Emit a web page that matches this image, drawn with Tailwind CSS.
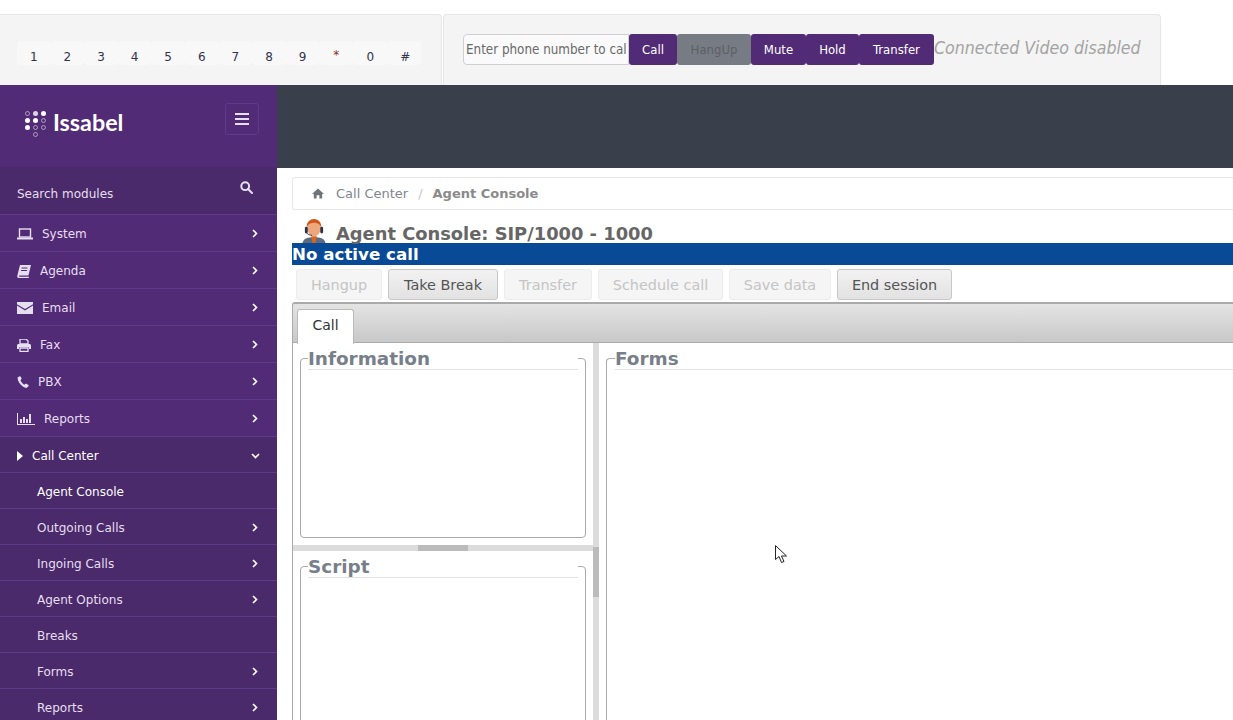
<!DOCTYPE html>
<html>
<head>
  <title>Agent Console</title>
  <script src="https://cdn.jsdelivr.net/npm/@tailwindcss/browser@4"></script>
</head>
<body class="bg-white">
<div class="relative h-[720px] w-[1233px] overflow-hidden font-['DejaVu_Sans',sans-serif] text-[12px]">

  <!-- softphone bar -->
  <div class="flex h-[85px] pt-[14px]">
    <div class="flex h-[71px] w-[442px] items-end rounded-tr border border-b-0 border-l-0 border-[#e6e6e6] bg-[#f4f4f4] pb-[20px] pl-[17px] text-[12px] leading-[12px] text-[#33334d]">
      <span class="flex h-[24px] w-[33.6px] items-end justify-center rounded-sm bg-[#f8f8f8] pb-[2px]">1</span>
      <span class="flex h-[24px] w-[33.6px] items-end justify-center rounded-sm bg-[#f8f8f8] pb-[2px]">2</span>
      <span class="flex h-[24px] w-[33.6px] items-end justify-center rounded-sm bg-[#f8f8f8] pb-[2px]">3</span>
      <span class="flex h-[24px] w-[33.6px] items-end justify-center rounded-sm bg-[#f8f8f8] pb-[2px]">4</span>
      <span class="flex h-[24px] w-[33.6px] items-end justify-center rounded-sm bg-[#f8f8f8] pb-[2px]">5</span>
      <span class="flex h-[24px] w-[33.6px] items-end justify-center rounded-sm bg-[#f8f8f8] pb-[2px]">6</span>
      <span class="flex h-[24px] w-[33.6px] items-end justify-center rounded-sm bg-[#f8f8f8] pb-[2px]">7</span>
      <span class="flex h-[24px] w-[33.6px] items-end justify-center rounded-sm bg-[#f8f8f8] pb-[2px]">8</span>
      <span class="flex h-[24px] w-[33.6px] items-end justify-center rounded-sm bg-[#f8f8f8] pb-[2px]">9</span>
      <span class="flex h-[24px] w-[34px] items-end justify-center rounded-sm bg-[#f8f8f8] pb-[4px] text-[#8a2b2b]">*</span>
      <span class="flex h-[24px] w-[34px] items-end justify-center rounded-sm bg-[#f8f8f8] pb-[2px]">0</span>
      <span class="flex h-[24px] w-[34px] items-end justify-center rounded-sm bg-[#f8f8f8] pb-[2px] pl-[2px]">#</span>
    </div>
    <div class="ml-px flex h-[71px] w-[718px] rounded-t border border-b-0 border-[#e6e6e6] bg-[#f4f4f4] pl-[19px] pt-[19px] text-[13px] [font-stretch:condensed]">
      <div class="flex h-[31px] w-[166px] items-center overflow-hidden rounded-l-[4px] border border-[#cfcfcf] bg-[#fafafa] pl-[2px] whitespace-nowrap text-[13.3px] text-[#6a6a6a]">Enter phone number to cal</div>
      <div class="flex h-[31px] w-[48px] items-center justify-center rounded-[3px] bg-[#522b76] text-white">Call</div>
      <div class="flex h-[31px] w-[74px] items-center justify-center rounded-[3px] bg-[#777c84] text-[#5c6066]">HangUp</div>
      <div class="flex h-[31px] w-[55px] items-center justify-center rounded-[3px] bg-[#522b76] text-white">Mute</div>
      <div class="flex h-[31px] w-[53px] items-center justify-center rounded-[3px] bg-[#522b76] text-white">Hold</div>
      <div class="flex h-[31px] w-[75px] items-center justify-center rounded-[3px] bg-[#522b76] text-white">Transfer</div>
      <div class="h-[31px] whitespace-nowrap text-[17.6px] leading-[29px] text-[#a3a3a3] italic">Connected Video disabled</div>
    </div>
  </div>

  <div class="flex h-[635px]">
    <!-- sidebar -->
    <aside class="w-[277px] shrink-0 bg-[#522b76] text-[#e6dff0]">
      <div class="flex h-[82px] pl-[25px] pr-[18px]">
        <div class="mt-[26px] grid h-[30px] w-[22px] grid-cols-3 content-start gap-[2px]">
          <i class="size-[5px] rounded-full border border-white/50"></i><i class="size-[5px] rounded-full bg-white/80"></i><i class="size-[5px] rounded-full bg-white"></i>
          <i class="size-[5px] rounded-full bg-white"></i><i class="size-[5px] rounded-full bg-white"></i><i class="size-[5px] rounded-full border border-white/50"></i>
          <i class="size-[5px] rounded-full bg-white"></i><i class="size-[5px] rounded-full border border-white/50"></i><i class="size-[5px] rounded-full border border-white/50"></i>
          <i class="col-start-2 size-[5px] rounded-full border border-white/50"></i>
        </div>
        <div class="mt-[21px] ml-[6px] h-[32px] font-['Lato',sans-serif] text-[23.3px] leading-[32px] font-bold text-white">Issabel</div>
        <div class="mt-[18px] ml-auto flex h-[32px] w-[34px] flex-col items-center justify-center gap-[3px] rounded-[3px] border border-[#5f3a8a]">
          <i class="h-[2px] w-[14px] bg-[#e6dff0]"></i><i class="h-[2px] w-[14px] bg-[#e6dff0]"></i><i class="h-[2px] w-[14px] bg-[#e6dff0]"></i>
        </div>
      </div>
      <div class="flex h-[48px] items-start justify-between border-b border-[#5f3a8a] bg-[#4a2a6a] pl-[17px] pr-[24px] pt-[19px]">
        <span class="leading-[17px]">Search modules</span>
        <svg class="-mt-[5px]" width="13" height="13" viewBox="0 0 13 13" fill="none" stroke="#e6dff0" stroke-width="2"><circle cx="5.2" cy="5.2" r="3.9"/><path d="M8 8l4 4" stroke-linecap="round"/></svg>
      </div>

      <div class="flex h-[37px] items-center justify-between border-b border-[#5f3a8a] pl-[17px] pr-[19px] pt-[2px]">
        <span class="flex items-center gap-[9px]"><svg width="16" height="12" viewBox="0 0 16 12" fill="none"><rect x="2.5" y="1" width="11" height="8" stroke="#e6dff0" stroke-width="1.4"/><rect y="9.5" width="16" height="2" fill="#e6dff0"/></svg>System</span>
        <svg class="-mt-[2px]" width="6" height="9" viewBox="0 0 6 9" fill="none" stroke="#fff" stroke-width="1.6"><path d="M1 1l3.5 3.5L1 8"/></svg>
      </div>
      <div class="flex h-[37px] items-center justify-between border-b border-[#5f3a8a] pl-[17px] pr-[19px] pt-[2px]">
        <span class="flex items-center gap-[9px]"><svg width="14" height="13" viewBox="0 0 14 13"><path d="M3 0h11l-2.6 10.5H2.6c-1 0-1 1.2 0 1.2H12l-.3 1.3H2C.5 13 0 12 .3 10.7z" fill="#e6dff0"/><path d="M4.5 3h6M4 5.5h6" stroke="#522b76"/></svg>Agenda</span>
        <svg class="-mt-[2px]" width="6" height="9" viewBox="0 0 6 9" fill="none" stroke="#fff" stroke-width="1.6"><path d="M1 1l3.5 3.5L1 8"/></svg>
      </div>
      <div class="flex h-[37px] items-center justify-between border-b border-[#5f3a8a] pl-[17px] pr-[19px] pt-[2px]">
        <span class="flex items-center gap-[9px]"><svg width="16" height="12" viewBox="0 0 16 12"><path d="M0 0h16v2.2L8 7 0 2.2z" fill="#e6dff0"/><path d="M0 3.6L8 8.4l8-4.8V12H0z" fill="#e6dff0"/></svg>Email</span>
        <svg class="-mt-[2px]" width="6" height="9" viewBox="0 0 6 9" fill="none" stroke="#fff" stroke-width="1.6"><path d="M1 1l3.5 3.5L1 8"/></svg>
      </div>
      <div class="flex h-[37px] items-center justify-between border-b border-[#5f3a8a] pl-[17px] pr-[19px] pt-[2px]">
        <span class="flex items-center gap-[9px]"><svg width="14" height="13" viewBox="0 0 14 13"><path d="M3 0h6l2 2v3H3z" fill="none" stroke="#e6dff0" stroke-width="1.3"/><path d="M1.5 5h11c.8 0 1.5.7 1.5 1.5V10h-2V8H2v2H0V6.500C0 5.700.7 5 1.500 5z" fill="#e6dff0"/><path d="M3 9h8v3.500H3z" fill="none" stroke="#e6dff0" stroke-width="1.300"/></svg>Fax</span>
        <svg class="-mt-[2px]" width="6" height="9" viewBox="0 0 6 9" fill="none" stroke="#fff" stroke-width="1.6"><path d="M1 1l3.5 3.5L1 8"/></svg>
      </div>
      <div class="flex h-[37px] items-center justify-between border-b border-[#5f3a8a] pl-[17px] pr-[19px] pt-[2px]">
        <span class="flex items-center gap-[9px]"><svg width="12" height="12" viewBox="0 0 12 12"><path d="M2.800.3L.8 1.300C-.2 4.500 4.500 11.500 9.500 12l2.200-2-.2-.9-2.700-1.500-1.500 1.200C6 8 3.800 5.600 3.500 4.300l1.200-1.500L3.600.4z" fill="#e6dff0"/></svg>PBX</span>
        <svg class="-mt-[2px]" width="6" height="9" viewBox="0 0 6 9" fill="none" stroke="#fff" stroke-width="1.6"><path d="M1 1l3.5 3.5L1 8"/></svg>
      </div>
      <div class="flex h-[37px] items-center justify-between border-b border-[#5f3a8a] pl-[17px] pr-[19px] pt-[2px]">
        <span class="flex items-center gap-[9px]"><svg width="18" height="12" viewBox="0 0 18 12" fill="#e6dff0"><path d="M0 0h1v11h17v1H0z"/><path d="M3 6h2v4H3zM6 4h2v6H6zM9 6h2v4H9zM12 1h2v9h-2z"/></svg>Reports</span>
        <svg class="-mt-[2px]" width="6" height="9" viewBox="0 0 6 9" fill="none" stroke="#fff" stroke-width="1.6"><path d="M1 1l3.5 3.5L1 8"/></svg>
      </div>

      <div class="bg-[#4a2a6a]">
        <div class="flex h-[36px] items-center justify-between border-b border-[#5f3a8a] pl-[17px] pr-[17px] pt-[2px] text-white">
          <span class="flex items-center gap-[9px]"><svg width="6" height="10" viewBox="0 0 6 10" fill="#fff"><path d="M0 0l6 5-6 5z"/></svg>Call Center</span>
          <svg width="9" height="6" viewBox="0 0 9 6" fill="none" stroke="#fff" stroke-width="1.6"><path d="M1 1l3.500 3.500L8 1"/></svg>
        </div>
        <div class="flex h-[36px] items-center justify-between border-b border-[#5f3a8a] pl-[37px] pr-[19px] pt-[2px] text-white">Agent Console</div>
        <div class="flex h-[36px] items-center justify-between border-b border-[#5f3a8a] pl-[37px] pr-[19px] pt-[2px]">Outgoing Calls<svg width="6" height="9" viewBox="0 0 6 9" fill="none" stroke="#fff" stroke-width="1.6"><path d="M1 1l3.5 3.5L1 8"/></svg></div>
        <div class="flex h-[36px] items-center justify-between border-b border-[#5f3a8a] pl-[37px] pr-[19px] pt-[2px]">Ingoing Calls<svg width="6" height="9" viewBox="0 0 6 9" fill="none" stroke="#fff" stroke-width="1.6"><path d="M1 1l3.5 3.5L1 8"/></svg></div>
        <div class="flex h-[36px] items-center justify-between border-b border-[#5f3a8a] pl-[37px] pr-[19px] pt-[2px]">Agent Options<svg width="6" height="9" viewBox="0 0 6 9" fill="none" stroke="#fff" stroke-width="1.6"><path d="M1 1l3.5 3.5L1 8"/></svg></div>
        <div class="flex h-[36px] items-center justify-between border-b border-[#5f3a8a] pl-[37px] pr-[19px] pt-[2px]">Breaks</div>
        <div class="flex h-[36px] items-center justify-between border-b border-[#5f3a8a] pl-[37px] pr-[19px] pt-[2px]">Forms<svg width="6" height="9" viewBox="0 0 6 9" fill="none" stroke="#fff" stroke-width="1.6"><path d="M1 1l3.5 3.5L1 8"/></svg></div>
        <div class="flex h-[36px] items-center justify-between border-b border-[#5f3a8a] pl-[37px] pr-[19px] pt-[2px]">Reports<svg width="6" height="9" viewBox="0 0 6 9" fill="none" stroke="#fff" stroke-width="1.6"><path d="M1 1l3.5 3.5L1 8"/></svg></div>
      </div>
    </aside>

    <!-- main -->
    <main class="min-w-0 flex-1">
      <div class="h-[83px] bg-[#393f4b]"></div>
      <div class="pl-[15px]">
        <div class="mt-[9px] flex h-[33px] w-[960px] items-center rounded-l-[3px] border border-r-0 border-[#e8e8e8] pl-[19px] text-[13px] text-[#80858c]">
          <svg width="12" height="11" viewBox="0 0 13 11" fill="#6f747b"><path d="M6.500 0L0 6h2v5h3V7.500h3V11h3V6h2z"/></svg>
          <span class="ml-[12px]">Call Center</span>
          <span class="ml-[10px] text-[#c5c5c5]">/</span>
          <span class="ml-[10px] font-bold text-[#8a8a8a]">Agent Console</span>
        </div>

        <div class="flex h-[33px] items-start pl-[8px]">
          <svg class="mt-[9px] shrink-0" width="28" height="24" viewBox="0 0 28 25">
            <path d="M2 25c1-5 6-6 12-6s11 1 12 6z" fill="#5d6a80"/>
            <path d="M11 18h6l-1.500 7h-3z" fill="#d9661f"/>
            <ellipse cx="14" cy="10" rx="7" ry="8" fill="#eda77c"/>
            <path d="M6.500 9C6 3 10 0 14 0s8 3 7.500 9C20 5 17 4 14 4S8 5 6.500 9z" fill="#d2561c"/>
            <rect x="4.500" y="8" width="3" height="7" rx="1.500" fill="#2d3340"/>
            <rect x="20.500" y="8" width="3" height="7" rx="1.500" fill="#2d3340"/>
            <path d="M6 14c1 2 4 3 6 3" stroke="#2d3340" fill="none"/>
          </svg>
          <h1 class="mt-[13px] ml-[8px] text-[17.85px] leading-[22px] font-bold whitespace-nowrap text-[#666]">Agent Console: SIP/1000 - 1000</h1>
        </div>
        <div class="h-[22px] bg-[#084a96] text-[16.7px] leading-[22px] font-bold text-white">No active call</div>

        <div class="flex h-[37px] items-start gap-[6px] pl-[4px] pt-[4px] text-[14.4px] text-[#c4c4c4]">
          <div class="flex h-[31px] w-[86px] items-center justify-center rounded-[3px] border border-[#ececec] bg-[#f5f5f5] pt-[2px]">Hangup</div>
          <div class="flex h-[31px] w-[110px] items-center justify-center rounded-[3px] border border-[#c8c8c8] bg-gradient-to-b from-[#f2f2f2] to-[#e2e2e2] pt-[2px] text-[#555]">Take Break</div>
          <div class="flex h-[31px] w-[88px] items-center justify-center rounded-[3px] border border-[#ececec] bg-[#f5f5f5] pt-[2px]">Transfer</div>
          <div class="flex h-[31px] w-[125px] items-center justify-center rounded-[3px] border border-[#ececec] bg-[#f5f5f5] pt-[2px]">Schedule call</div>
          <div class="flex h-[31px] w-[102px] items-center justify-center rounded-[3px] border border-[#ececec] bg-[#f5f5f5] pt-[2px]">Save data</div>
          <div class="flex h-[31px] w-[115px] items-center justify-center rounded-[3px] border border-[#c8c8c8] bg-gradient-to-b from-[#f2f2f2] to-[#e2e2e2] pt-[2px] text-[#555]">End session</div>
        </div>

        <!-- tabs -->
        <div class="flex h-[41px] rounded-tl-[3px] border-t-2 border-l border-b border-[#aaa] bg-gradient-to-b from-[#e4e4e4] to-[#c8c8c8] pl-[4px] pt-[5px]">
          <div class="flex h-[35px] w-[57px] items-center justify-center rounded-t-[3px] border border-b-0 border-[#bbb] bg-white pb-[4px] text-[14px] text-[#333]">Call</div>
        </div>

        <div class="flex h-[378px] border-l border-[#aaa]">
          <div class="w-[300px] shrink-0">
            <div class="h-[202px] px-[7px] pt-[3px]">
              <fieldset class="h-[192px] rounded-[4px] border border-[#aaa]">
                <legend class="ml-[7px] h-[24px] w-[270px] border-b border-[#e2e2e2] text-[18.4px] leading-[26px] font-bold text-[#777f8a]">Information</legend>
              </fieldset>
            </div>
            <div class="flex h-[6px] justify-center bg-[#dcdcdc]"><div class="h-[6px] w-[50px] bg-[#bbb]"></div></div>
            <div class="px-[7px] pt-[3px]">
              <fieldset class="h-[300px] rounded-[4px] border border-[#aaa]">
                <legend class="ml-[7px] h-[24px] w-[270px] border-b border-[#e2e2e2] text-[18.4px] leading-[26px] font-bold text-[#777f8a]">Script</legend>
              </fieldset>
            </div>
          </div>
          <div class="h-full w-[6px] shrink-0 bg-[#dcdcdc] pt-[204px]"><div class="h-[50px] w-[6px] bg-[#bbb]"></div></div>
          <div class="min-w-0 flex-1 pl-[7px] pt-[3px]">
            <fieldset class="h-[500px] w-[800px] rounded-l-[4px] border border-r-0 border-[#aaa]">
              <legend class="ml-[8px] h-[24px] w-[800px] border-b border-[#e2e2e2] text-[18.4px] leading-[26px] font-bold text-[#777f8a]">Forms</legend>
            </fieldset>
          </div>
        </div>
      </div>
    </main>
  </div>

  <!-- mouse pointer -->
  <svg class="absolute left-[775px] top-[545px]" width="13" height="20" viewBox="0 0 13 20" fill="#fff" stroke="#222"><path d="M.5.500v14l3.500-3 2.500 6 2.500-1-2.500-5.500h5z"/></svg>
</div>
</body>
</html>
